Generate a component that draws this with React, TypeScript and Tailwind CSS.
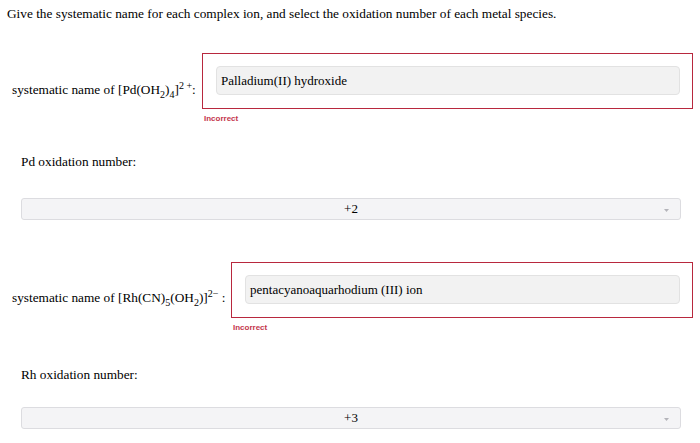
import React from "react";

function Chevron() {
  return (
    <svg width="5" height="3" viewBox="0 0 5 3" className="absolute right-[11px] top-[10px]">
      <path d="M0 0 L5 0 L2.5 3 Z" fill="#b4b4ba" />
    </svg>
  );
}

function NameRow({
  label,
  labelWidth,
  labelPad,
  value,
}: {
  label: React.ReactNode;
  labelWidth: string;
  labelPad: string;
  value: string;
}) {
  return (
    <div className="flex items-start">
      <div className={`${labelWidth} ${labelPad} shrink-0 pl-[12px] text-[13.3px] leading-[15px] whitespace-nowrap`}>
        {label}
      </div>
      <div className="flex-1 mr-[7px]">
        <div className="border-[1.5px] border-[#b8283e] pt-[12px] pb-[13px] pl-[13px] pr-[12px]">
          <div className="h-[29px] bg-[#f2f2f2] border border-[#e2e2e2] rounded-[4px] pl-[4px] flex items-center text-[13px]">
            {value}
          </div>
        </div>
        <div className="mt-[5px] ml-[2px] text-[8px] leading-[10px] font-bold text-[#c4354c] font-['Liberation_Sans',Arial,sans-serif]">
          Incorrect
        </div>
      </div>
    </div>
  );
}

function Select({ value }: { value: string }) {
  return (
    <div className="relative ml-[21px] w-[660px] h-[22px] bg-[#f4f4f6] border border-[#dcdce0] rounded-[3px] flex items-center justify-center text-[13px]">
      {value}
      <Chevron />
    </div>
  );
}

export default function App() {
  return (
    <div className="w-[700px] h-[443px] bg-white text-black overflow-hidden font-['Liberation_Serif','Times_New_Roman',serif]">
      <p className="pt-[6px] pl-[7px] text-[13.3px] leading-[15px]">
        Give the systematic name for each complex ion, and select the oxidation number of each metal species.
      </p>

      <div className="mt-[32px]">
        <NameRow
          labelWidth="w-[202px]"
          labelPad="pt-[29px]"
          value="Palladium(II) hydroxide"
          label={
            <>
              systematic name of [Pd(OH<sub className="text-[10px] -bottom-[4px]">2</sub>)
              <sub className="text-[10px] -bottom-[4px]">4</sub>]
              <sup className="text-[10px] -top-[5px]">2 +</sup>:
            </>
          }
        />
      </div>

      <div className="mt-[30px] pl-[21px] text-[13.3px] leading-[15px]">Pd oxidation number:</div>
      <div className="mt-[29px]">
        <Select value="+2" />
      </div>

      <div className="mt-[42px]">
        <NameRow
          labelWidth="w-[231px]"
          labelPad="pt-[28px]"
          value="pentacyanoaquarhodium (III) ion"
          label={
            <>
              systematic name of [Rh(CN)<sub className="text-[10px] -bottom-[4px]">5</sub>(OH
              <sub className="text-[10px] -bottom-[4px]">2</sub>)]
              <sup className="text-[10px] -top-[5px]">2−</sup> :
            </>
          }
        />
      </div>

      <div className="mt-[34px] pl-[21px] text-[13.3px] leading-[15px]">Rh oxidation number:</div>
      <div className="mt-[25px]">
        <Select value="+3" />
      </div>
    </div>
  );
}
